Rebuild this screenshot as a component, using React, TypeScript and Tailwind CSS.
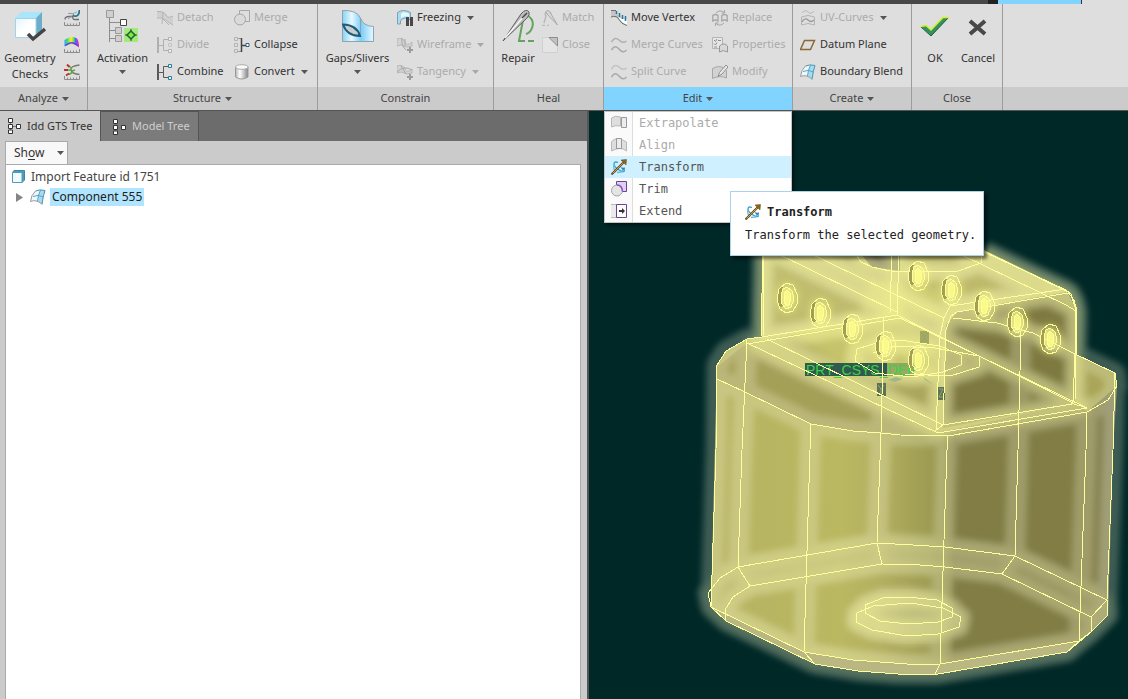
import { ReactNode } from "react";

const G = "#a6a6a6";

function Icon({ children, size = 16 }: { children: ReactNode; size?: number }) {
    return (
        <svg width={size} height={size} viewBox={`0 0 ${size} ${size}`} fill="none" className="shrink-0" aria-hidden="true">
            {children}
        </svg>
    )
}

const Ruler = () => <path d="M.5 12v3.500H15.500V12M3.500 13.500v2M6.500 13.500v2M9.500 13.500v2M12.500 13.500v2" stroke="#8c8c8c" />

function CurveCheckIcon() {
    return (
        <Icon>
            <Ruler />
            <path d="M1 9.500Q1 6.500 5 6.500H9Q8 10 12 9.500H15" stroke="#6f6f6f" strokeWidth="1.300" />
            <path d="M4 3.500Q7 3 10 4Q8 6 4 9" stroke="#8d9ba2" />
            <path d="M9 5.500Q15 8 15.500 0" stroke="#28728d" strokeWidth="1.800" />
            <path d="M9 3.500L13 2" stroke="#8faebb" />
        </Icon>
    )
}

function ShadeCheckIcon() {
    return (
        <Icon>
            <defs>
                <linearGradient id="rainbow">
                    <stop offset="0" stopColor="#25a8f0" />
                    <stop offset=".2" stopColor="#42e07c" />
                    <stop offset=".45" stopColor="#fff02b" />
                    <stop offset=".62" stopColor="#7be04a" />
                    <stop offset=".75" stopColor="#2f7cf0" />
                    <stop offset=".88" stopColor="#c22df5" />
                    <stop offset="1" stopColor="#ff3a4a" />
                </linearGradient>
            </defs>
            <Ruler />
            <path d="M.5 9.500V3Q7-2 13 1.500Q15 4 15 10.500Q12 7 9 7T.5 9.500Z" fill="url(#rainbow)" />
            <path d="M1 8.500Q6 5 9 6T14.500 9" stroke="#6b39ee" strokeWidth="1.500" />
        </Icon>
    )
}

function NormalCheckIcon() {
    return (
        <Icon>
            <Ruler />
            <path d="M15.500 1Q6 2 7 6T15.500 10.500" stroke="#777" strokeWidth="1.300" />
            <path d="M5 2L8 4.500M4 6H8M5 10.500L9 8M8 7L11 6" stroke="#5aab42" strokeWidth="1.500" />
            <path d="M3 .5L5.500 3M0 6H4M2 11.500L5 9.500" stroke="#c03030" strokeWidth="2" />
        </Icon>
    )
}

function CubeCheckIcon() {
    return (
        <Icon size={32}>
            <defs>
                <linearGradient id="cubeFront" x2="1" y2="1">
                    <stop offset="0" stopColor="#e4f5fc" />
                    <stop offset=".5" stopColor="#fff" />
                </linearGradient>
            </defs>
            <path d="M1 8L7 2H28L22 8Z" fill="#a9e5fb" />
            <path d="M22 8L28 2V21L22 27.500Z" fill="#6cadc9" />
            <path d="M1.500 8.500H22V27.500H1.500Z" fill="url(#cubeFront)" stroke="#9fd4ea" />
            <path d="M14 24L19 29L31 19" stroke="#454545" strokeWidth="3.500" />
        </Icon>
    )
}

function ActivationIcon() {
    return (
        <Icon size={32}>
            <path d="M3.500 8V32M3.500 12.500H14M3.500 20.500H9M3.500 28.500H9" stroke="#8d8d8d" />
            <path d="M.5.500h7v7h-7ZM9.500 17.500h6v6h-6ZM9.500 25.500h6v6h-6Z" fill="#cfcfcf" stroke="#9a9a9a" />
            <path d="M14.500 9.500h6v6h-6Z" fill="#fff" stroke="#444" />
            <path d="M18 18H32V32H18Z" fill="#a0ea7e" />
            <path d="M25 19V31M19 25H31" stroke="#3d4a38" />
            <path d="M25 21L29 25L25 29L21 25Z" fill="#6cf24a" stroke="#315927" strokeWidth="1.500" />
        </Icon>
    )
}

function DetachIcon() {
    return (
        <Icon>
            <path d="M0 1.500Q8 1 9 5T16 6V15Q11 12 9 9T0 8Z" fill="#d0d0d0" />
            <path d="M0 1.500Q7 1 9 5T16 6M0 8Q6 7 9 10T16 15M6 2L5 14M5 8L12 15" stroke="#b4b4b4" />
        </Icon>
    )
}

function BranchIcon({ tone, node, dashed }: { tone: string; node: string; dashed?: boolean }) {
    return (
        <Icon>
            <path d="M1 0V16" stroke={tone} strokeWidth="2" />
            <path d="M2 8.500H6M6.500 2.500V13.500M6.500 2.500H12M6.500 13.500H12" stroke={tone} />
            <path d="M11.500.500h3v3h-3ZM11.500 12.500h3v3h-3Z" fill="#e6f5fb" stroke={node} />
            {dashed && <path d="M11.500 6.500h3v3h-3Z" stroke="#c4c4c4" />}
        </Icon>
    )
}

function MergeIcon() {
    return (
        <Icon>
            <path d="M5.500.500h10v11h-10Z" stroke={G} />
            <circle cx="6" cy="9.500" r="5.500" fill="#dadada" stroke={G} />
        </Icon>
    )
}

function CollapseIcon() {
    return (
        <Icon>
            <path d="M.5.500h3v3h-3ZM.5 6.500h3v3h-3ZM.5 12.500h3v3h-3Z" stroke="#b4b4b4" />
            <path d="M4 1.500H7.500M4 14.500H7.500" stroke="#9a9a9a" />
            <path d="M7.500 1V15M7.500 8.500H12" stroke="#444" strokeWidth="1.500" />
            <path d="M12 6.500h3v3h-3Z" fill="#fff" stroke="#2d667b" />
        </Icon>
    )
}

function CylinderIcon() {
    return (
        <Icon>
            <defs>
                <linearGradient id="cyl">
                    <stop offset="0" stopColor="#b5b5b5" />
                    <stop offset=".35" stopColor="#fff" />
                    <stop offset="1" stopColor="#858585" />
                </linearGradient>
            </defs>
            <path d="M1.500 3V13Q7.500 17 14 13V3Z" fill="url(#cyl)" stroke="#999" />
            <ellipse cx="7.800" cy="3" rx="6.300" ry="2.300" fill="#fafafa" stroke="#aaa" />
        </Icon>
    )
}

function GapsIcon() {
    return (
        <Icon size={32}>
            <defs>
                <linearGradient id="gapBlue">
                    <stop offset="0" stopColor="#86d4f5" />
                    <stop offset=".3" stopColor="#e9f8ff" />
                    <stop offset=".6" stopColor="#79cff8" />
                    <stop offset="1" stopColor="#e9f8ff" />
                </linearGradient>
            </defs>
            <path d="M.5.500Q15 0 18.500 8Q21 16 31.500 16.500V31.500H.5Z" fill="url(#gapBlue)" stroke="#8fa3ad" />
            <path d="M18.500 9V27" stroke="#8fa3ad" />
            <path d="M1 14.500Q15 15 18 26Q5 26 1 14.500Z" fill="#cdcdcd" stroke="#1d5e7c" strokeWidth="2" />
        </Icon>
    )
}

function FreezingIcon() {
    return (
        <Icon>
            <path d="M.5 2.500Q6-1.500 13.500 2.500V10Q8 6 3.500 10.500V14H.5Z" fill="#a6ddf5" stroke="#84a0ac" />
            <path d="M4 3.500Q8 1 12 4V7Q8 5 4 8Z" fill="#e8f8ff" />
            <path d="M9 7h3v9H9ZM13 7h3v9h-3Z" fill="#484848" />
        </Icon>
    )
}

function SheetPlusIcon({ cross }: { cross?: boolean }) {
    return (
        <Icon>
            <path d="M0 2Q6 0 8 5T15 5V9Q9 11 7 9T0 9Z" fill="#d3d3d3" stroke="#b8b8b8" />
            <path d={cross ? "M0 8Q7 1 15 6M4 2L9 10" : "M5 1V7Q6 10 9 13M8 2V9"} stroke={G} />
            <path d="M13 10V16M10 13H16" stroke="#9c9c9c" strokeWidth="2" />
        </Icon>
    )
}

function RepairIcon() {
    return (
        <Icon size={32}>
            <path d="M25 5Q33 10 30 18Q28 23 24 24M21 10L17 31H23M26 31H32" stroke="#64a35c" strokeWidth="2" />
            <path d="M1 31L19 4Q24-2 27 2Q28 5 25 8Z" fill="#bdbdbd" stroke="#5c5c5c" />
            <path d="M3 28L22 6" stroke="#f7f7f7" strokeWidth="1.500" />
            <path d="M20 8L25 3" stroke="#444" strokeWidth="1.500" />
        </Icon>
    )
}

function MatchIcon() {
    return (
        <Icon>
            <path d="M0 15.500H3M5 15.500H7M2 13L4 6Q2 3 5 2Q9 1 9 5" stroke="#bababa" strokeWidth="1.500" />
            <path d="M15.500 15L5 4Q3 1 5 .5Q7 0 8.500 3Z" fill="#d6d6d6" stroke="#aaa" />
        </Icon>
    )
}

function CloseSheetIcon() {
    return (
        <Icon>
            <path d="M.5.500h15v15H.5Z" fill="#e5e5e5" stroke="#d0d0d0" />
            <path d="M7 .5H15.500V9Z" fill="#c2c2c2" stroke="#8c8c8c" />
        </Icon>
    )
}

function MoveVertexIcon() {
    return (
        <Icon>
            <path d="M0 .5H5Q7 8 16 9V15.500Q12 15 8 10T0 7Z" fill="#c5c5c5" />
            <path d="M7 7Q12 10 16 9V15Q11 13 7 7Z" fill="#fff" />
            <path d="M0 7Q6 5 8 9.500T16 15.500M0 .5H5" stroke="#6f6f6f" />
            <path d="M5.500 1v3M8.500 3v4M11.500 5v4M14.500 6v5" stroke="#26799e" strokeWidth="1.500" />
        </Icon>
    )
}

function WavesIcon({ light }: { light?: boolean }) {
    return (
        <Icon>
            <path d="M.5 5Q4-1 8 3T15.500 4" stroke={light ? "#c2c2c2" : "#b0b0b0"} strokeWidth="1.500" />
            <path d="M.5 13Q4 7 8 12T15.500 13" stroke="#a9a9a9" strokeWidth="1.500" />
        </Icon>
    )
}

function ReplaceIcon() {
    return (
        <Icon>
            <path d="M.8 5.500V11Q3.500 9 6 11V5.500Q3.500 3.500.8 5.500ZM9.800 5.500V11Q12.500 9 15.200 11V5.500Q12.500 3.500 9.800 5.500Z" stroke={G} strokeWidth="1.300" />
            <path d="M4 3Q8-1 12 2.500M12 13Q8 17 4 13.500M12.500 0V3H9.500M3.500 16V13H6.500" stroke={G} />
        </Icon>
    )
}

function PropertiesIcon() {
    return (
        <Icon>
            <path d="M.5.500h10v11H.5Z" fill="#e6e6e6" stroke="#b5b5b5" />
            <path d="M2 3L3.500 4.500L5 2M6 3.500h3M2 6.500L3.500 8L5 5.500M2 10h3" stroke="#909090" />
            <path d="M7.500 9Q12 5 15.500 9V15Q11 12 7.500 15Z" fill="#d8d8d8" stroke="#979797" />
        </Icon>
    )
}

function ModifyIcon() {
    return (
        <Icon>
            <path d="M.5 4.500Q7 1 12 4L14.500 7V14Q8 11 .5 14.500Z" fill="#d2d2d2" stroke={G} />
            <path d="M6 12.500L7.500 8.500L14 1L16 3L10 10Z" fill="#e8e8e8" stroke="#8f8f8f" />
        </Icon>
    )
}

function UvIcon() {
    return (
        <Icon>
            <path d="M2 3Q5-1 8 2T14 1" stroke="#b8b8b8" />
            <path d="M1.500 7Q8 4 14.500 7V15Q8 12 1.500 15Z" stroke="#b3b3b3" />
            <path d="M2 12Q5 7 8 10T14 10" stroke="#999" strokeWidth="1.300" />
        </Icon>
    )
}

function BlendIcon() {
    return (
        <Icon>
            <path d="M5 2Q10 0 15 1.500Q13 7 12 15.500Q6 10 .5 12.500Q1 6 5 2Z" fill="#eef8fc" />
            <path d="M10.500 1L15 1.500Q13 7 12 15.500L7.500 12Q8 6 10.500 1Z" fill="#a5dcf2" />
            <path d="M10.500 1Q8 6 7.500 12M3 7.500Q8 5 13.500 8" stroke="#5aa5c2" />
            <path d="M5.500 2Q10 0 15 1.500Q13 7 12 15.500" stroke="#4c93b0" />
            <path d="M12 15Q6 10 .5 12.500Q1 6 5.500 2" stroke="#9a9a9a" />
        </Icon>
    )
}

function TransformIcon() {
    return (
        <Icon>
            <path d="M7 3.500Q3 2 3 5T8 11T13.500 11.500" stroke="#3a9dc8" strokeWidth="1.300" />
            <path d="M3 5.500Q2 11 5 13M9.500 8Q13 9 11 13L6 13.500" stroke="#62b9dc" strokeWidth="1.300" />
            <path d="M10 9L14 8.500L13.500 12Z" fill="#2b86b0" />
            <path d="M.5 15.500L14 2" stroke="#5f4616" strokeWidth="2" />
            <path d="M1.500 14.500L13 3" stroke="#c6964b" strokeWidth="1" />
            <path d="M10 1L15.500.500L15 6Z" fill="#8c6420" stroke="#5f4616" strokeWidth=".5" />
        </Icon>
    )
}

function TrimIcon() {
    return (
        <Icon>
            <path d="M5.500.500h10v10h-10Z" fill="#ddd0f2" stroke="#6a4398" />
            <circle cx="6" cy="9.500" r="5.500" fill="#e4e4e4" stroke={G} />
            <path d="M6 4Q11 4 11.500 10.500" stroke="#8a4fc8" strokeWidth="1.500" />
        </Icon>
    )
}

function ExtendIcon() {
    return (
        <Icon>
            <path d="M0 1h6v14H0Z" fill="#ebebeb" />
            <path d="M0 1.500H6M0 14.500H6" stroke="#bbb" />
            <path d="M5.500 1.500h10v13h-10Z" fill="#fff" stroke="#6a4398" />
            <path d="M8 8H12" stroke="#333" strokeWidth="2" />
            <path d="M11 5L14 8L11 11Z" fill="#333" />
        </Icon>
    )
}

function BookIcon({ align }: { align?: boolean }) {
    return (
        <Icon>
            <path d={align ? "M.5 14V5Q3 1 8 2T15.500 5V14Q12 11 8 11.500T.5 14Z" : "M.5 12V3Q4 0 9.500 2V11Q4 10 .5 12Z"} fill="#dedede" stroke="#b8b8b8" />
            <path d={align ? "M5.500 1.500h5v10h-5Z" : "M10.500 2.500h5v10h-5Z"} fill="#ececec" stroke="#999" />
        </Icon>
    )
}

function DatumIcon() {
    return (
        <Icon>
            <path d="M4.500 3.500H14.500L10.500 12.500H.5Z" stroke="#8a6a35" strokeWidth="1.500" />
        </Icon>
    )
}

function OkIcon() {
    return (
        <svg width="28" height="32" viewBox="0 0 28 32" aria-hidden="true">
            <path d="M0 16.500L5 15L10 20L22 7H28L10 26Z" fill="#2f9362" />
            <path d="M0 17L10 26L28 7" fill="none" stroke="#205c33" />
            <path d="M0 16.500L5 15.500L10 20L22 7.500H28" fill="none" stroke="#d9f020" strokeWidth="1.500" />
        </svg>
    )
}

function CancelIcon() {
    return (
        <svg width="20" height="32" viewBox="0 0 20 32" aria-hidden="true">
            <path d="M2 11L17 24M17 11L2 24" stroke="#484848" strokeWidth="4" />
        </svg>
    )
}

function TreeIcon() {
    return (
        <Icon>
            <path d="M3.500 1V15M3 8.500H9" stroke="#777" />
            <path d="M1.500.500h4v4h-4ZM1.500 6.500h4v4h-4ZM1.500 12h4v3.500h-4ZM9.500 6.500h4v4h-4Z" fill="#fff" stroke="#333" />
        </Icon>
    )
}

function FeatureIcon() {
    return (
        <Icon>
            <path d="M1.500 3.500L3 1.500H13.500V11L11 13.500Z" fill="#4d9dba" stroke="#3e879f" />
            <path d="M1.500 3.500H11V13.500H1.500Z" fill="#f2fbff" stroke="#4d9dba" />
        </Icon>
    )
}

function Arrow({ faded }: { faded?: boolean }) {
    return (
        <svg width="7" height="4" viewBox="0 0 7 4" className="shrink-0" aria-hidden="true">
            <path d="M0 0H7L3.500 4Z" fill={faded ? "#a8a8a8" : "#555"} />
        </svg>
    )
}

interface ToolProps {
    icon: ReactNode
    label: string
    disabled?: boolean
    arrow?: boolean
    fadedArrow?: boolean
}

function Tool({ icon, label, disabled, arrow, fadedArrow }: ToolProps) {
    return (
        <button disabled={disabled} className="flex h-[27px] items-center gap-1 whitespace-nowrap text-[#333] disabled:text-[#ababab]">
            {icon}
            <span>{label}</span>
            {arrow && <span className="pl-0.5"><Arrow faded={fadedArrow} /></span>}
        </button>
    )
}

function BigTool({ icon, label, arrow }: ToolProps) {
    return (
        <button className="flex flex-col items-center pt-1.5 text-center leading-4 text-[#333]">
            {icon}
            <span className="mt-2">{label}</span>
            {arrow && <span className="mt-1"><Arrow /></span>}
        </button>
    )
}

interface GroupProps {
    title: string
    width: string
    arrow?: boolean
    active?: boolean
    children: ReactNode
    menu?: ReactNode
}

function Group({ title, width, arrow, active, children, menu }: GroupProps) {
    return (
        <section className={`relative flex shrink-0 flex-col border-r border-[#9c9c9c] ${width}`}>
            <div className="flex h-[83px] items-start">{children}</div>
            <button className={`flex h-[23px] items-center justify-center gap-1 text-[#444] ${active ? "bg-[#80d4ff]" : "bg-[#cbcbcb]"}`}>
                {title}
                {arrow && <Arrow />}
            </button>
            {menu}
        </section>
    )
}

const menuItems = [
    { label: "Extrapolate", icon: <BookIcon />, disabled: true },
    { label: "Align", icon: <BookIcon align />, disabled: true },
    { label: "Transform", icon: <TransformIcon />, selected: true },
    { label: "Trim", icon: <TrimIcon /> },
    { label: "Extend", icon: <ExtendIcon /> },
]

function EditMenu() {
    return (
        <div className="absolute left-0 top-[107px] z-10 w-full border border-[#c4c4c4] bg-white font-['DejaVu_Sans_Mono',monospace] text-[12px] shadow-[2px_2px_3px_rgba(0,0,0,0.5)]">
            {menuItems.map((item) => (
                <button
                    key={item.label}
                    disabled={item.disabled}
                    className={`flex h-[22px] w-full items-center text-left text-[#555] disabled:text-[#ababab] ${item.selected ? "bg-[#cff0ff]" : ""}`}
                >
                    <span className={`flex h-full w-7 items-center justify-center border-r ${item.selected ? "border-[#cff0ff]" : "border-[#ddd] bg-[#fafafa]"}`}>{item.icon}</span>
                    <span className="pl-1.5">{item.label}</span>
                </button>
            ))}
            <div role="tooltip" className="absolute left-[125px] top-[79px] w-[254px] border border-[#a9d3e8] bg-white px-3.5 py-3 leading-4 text-[#222] shadow-[3px_3px_3px_rgba(0,0,0,0.5)]">
                <div className="flex items-center gap-1.5 font-bold"><TransformIcon />Transform</div>
                <p className="mt-[7px] whitespace-nowrap">Transform the selected geometry.</p>
            </div>
        </div>
    )
}

function Ribbon() {
    return (
        <header className="flex border-b border-[#555] bg-[#dedede]">
            <Group title="Analyze" width="w-[88px]" arrow>
                <div className="flex w-[60px] justify-center"><BigTool icon={<CubeCheckIcon />} label="Geometry Checks" /></div>
                <div className="ml-1 flex flex-col">
                    <button aria-label="Curve analysis" className="flex h-[27px] items-center"><CurveCheckIcon /></button>
                    <button aria-label="Shading analysis" className="flex h-[27px] items-center"><ShadeCheckIcon /></button>
                    <button aria-label="Normal analysis" className="flex h-[27px] items-center"><NormalCheckIcon /></button>
                </div>
            </Group>
            <Group title="Structure" width="w-[230px]" arrow>
                <div className="flex w-[69px] justify-center"><BigTool icon={<ActivationIcon />} label="Activation" arrow /></div>
                <div className="flex w-[77px] flex-col">
                    <Tool icon={<DetachIcon />} label="Detach" disabled />
                    <Tool icon={<BranchIcon tone="#b0b0b0" node="#b0b0b0" dashed />} label="Divide" disabled />
                    <Tool icon={<BranchIcon tone="#5a5a5a" node="#2d7e9b" />} label="Combine" />
                </div>
                <div className="flex flex-col">
                    <Tool icon={<MergeIcon />} label="Merge" disabled />
                    <Tool icon={<CollapseIcon />} label="Collapse" />
                    <Tool icon={<CylinderIcon />} label="Convert" arrow />
                </div>
            </Group>
            <Group title="Constrain" width="w-[176px]">
                <div className="flex w-[79px] justify-center"><BigTool icon={<GapsIcon />} label="Gaps/Slivers" arrow /></div>
                <div className="flex flex-col">
                    <Tool icon={<FreezingIcon />} label="Freezing" arrow />
                    <Tool icon={<SheetPlusIcon />} label="Wireframe" disabled arrow fadedArrow />
                    <Tool icon={<SheetPlusIcon cross />} label="Tangency" disabled arrow fadedArrow />
                </div>
            </Group>
            <Group title="Heal" width="w-[110px]">
                <div className="flex w-12 justify-center"><BigTool icon={<RepairIcon />} label="Repair" /></div>
                <div className="flex flex-col">
                    <Tool icon={<MatchIcon />} label="Match" disabled />
                    <Tool icon={<CloseSheetIcon />} label="Close" disabled />
                </div>
            </Group>
            <Group title="Edit" width="w-[189px]" arrow active menu={<EditMenu />}>
                <div className="ml-[7px] flex w-[101px] flex-col">
                    <Tool icon={<MoveVertexIcon />} label="Move Vertex" />
                    <Tool icon={<WavesIcon />} label="Merge Curves" disabled />
                    <Tool icon={<WavesIcon light />} label="Split Curve" disabled />
                </div>
                <div className="flex flex-col">
                    <Tool icon={<ReplaceIcon />} label="Replace" disabled />
                    <Tool icon={<PropertiesIcon />} label="Properties" disabled />
                    <Tool icon={<ModifyIcon />} label="Modify" disabled />
                </div>
            </Group>
            <Group title="Create" width="w-[119px]" arrow>
                <div className="ml-[7px] flex flex-col">
                    <Tool icon={<UvIcon />} label="UV-Curves" disabled arrow />
                    <Tool icon={<DatumIcon />} label="Datum Plane" />
                    <Tool icon={<BlendIcon />} label="Boundary Blend" />
                </div>
            </Group>
            <Group title="Close" width="w-[91px]">
                <div className="flex w-[46px] justify-center"><BigTool icon={<OkIcon />} label="OK" /></div>
                <div className="flex w-10 justify-center"><BigTool icon={<CancelIcon />} label="Cancel" /></div>
            </Group>
            <div className="flex flex-1 flex-col justify-end"><div className="h-[23px] bg-[#cbcbcb]" /></div>
        </header>
    )
}

function TreePanel() {
    return (
        <aside className="flex w-[589px] shrink-0 flex-col border-r-2 border-[#555] bg-[#cbcbcb] text-[12px]">
            <div role="tablist" className="flex h-[30px] bg-[#6c6c6c] text-[11px]">
                <button role="tab" aria-selected="true" className="flex w-[100px] items-center gap-1 bg-[#cbcbcb] pl-[7px] text-[#333]"><TreeIcon />Idd GTS Tree</button>
                <button role="tab" aria-selected="false" className="flex w-[99px] items-center gap-1 border border-b-0 border-[#555] bg-[#7b7b7b] pl-[11px] text-[#cecece]"><TreeIcon />Model Tree</button>
            </div>
            <div className="flex flex-1 flex-col pl-[5px] pr-[6px]">
                <button className="flex h-[23px] w-[63px] items-center justify-between border border-[#aaa] border-b-0 bg-[#f8f8f8] pl-2 pr-[3px] text-[#333]">
                    <span>Sh<u className="underline-offset-2">o</u>w</span><Arrow />
                </button>
                <ul className="flex-1 border border-b-0 border-[#aaa] bg-white pt-[2px] text-[#444]">
                    <li className="flex h-5 items-center gap-1 pl-[5px]"><FeatureIcon />Import Feature id 1751</li>
                    <li className="flex h-5 items-center pl-2.5">
                        <svg width="7" height="9" viewBox="0 0 7 9" aria-hidden="true"><path d="M0 0L7 4.500L0 9Z" fill="#858585" /></svg>
                        <span className="ml-[7px] mr-1"><BlendIcon /></span>
                        <span className="bg-[#b0e4ff] px-0.5 leading-[18px] text-[#222]">Component 555</span>
                    </li>
                </ul>
            </div>
        </aside>
    )
}

// lower body edges
const bodyLines = [
    "M762 337L747 339L726 351L717 365L716 450L711 607",
    "M717 379L745 392L811 424L853 431L881 433L900 435L948 436L1087 412",
    "M747 339L742 450L738 567",
    "M811 424L810 450L804 652",
    "M884 317L881 433L877 543",
    "M948 436L947 450L944 540L940 664",
    "M1021 331L1018 450L1015 556",
    "M1087 412L1086 450L1079 641",
    "M1115 373L1113 450L1107 600",
    "M1075 354L1115 373L1117 386L1108 400L1087 412",
    "M738 567L877 543L913 545L945 547L1015 556L1107 600L1108 615L1091 632L1067 652L938 674H898L858 671L815 664L726 621L711 607L708 593L720 578Z",
    "M750 586L882 564L920 565L945 567L1002 574L1091 617V632",
    "M750 586L733 597L725 610L726 621",
    "M711 607L804 652L853 660L907 664H940L1079 641L1091 632",
    "M804 652L815 664M940 664L935 674M738 567L750 586M877 543L882 564M1015 556L1002 574M1107 600L1091 617M1079 641L1067 652",
    "M865 605L883 598L907 597L937 600L952 608V617L938 622L908 624L880 621L865 613Z",
    "M857 613L873 606L910 603L943 608L961 617L959 627L938 634L907 636L872 630L856 622Z",
]

// bracket and cover plate edges
const topLines = [
    "M763 250L761 337M764 250L763 337",
    "M762 337L897 315L1073 403",
    "M747 344L900 318L1087 408L1071 403",
    "M747 343L938 433L1087 408",
    "M767 339L943 425L1072 404",
    "M770 250L897 312M803 250L944 318",
    "M857 256L861 262L872 267L890 271L955 272L981 263L982 250",
    "M892 250L890 313M899 250L897 317",
    "M984 252L1066 290L1071 294L1075 307V354L1073 403",
    "M960 254L1066 305L1076 311M986 252L1068 292L1074 300L1077 311L1075 400",
    "M1066 289L950 306L944 318L940 335L936 430L943 425",
    "M1068 293L957 312L951 316L946 330L943 425",
    "M953 318L997 323L1033 333L1075 354",
    "M857 349L880 342L900 340L940 346L961 355V365L943 372L912 377L875 373L855 361Z",
    "M873 353L895 346L935 348L979 356V367L950 376L905 374",
]

const bolts = [
    [787, 298], [820, 313], [852, 329], [885, 346], [918, 360],
    [918, 276], [951, 290], [984, 306], [1017, 322], [1050, 339],
]

function Viewport() {
    return (
        <main className="min-w-0 flex-1 overflow-hidden bg-[#002827]">
            <svg viewBox="589 111 539 588" className="block w-full" role="img" aria-label="Model view">
                <defs>
                    <linearGradient id="bodyFill" gradientUnits="userSpaceOnUse" x1="711" y1="0" x2="1117" y2="0">
                        <stop offset="0" stopColor="#b6b362" />
                        <stop offset=".32" stopColor="#bab861" />
                        <stop offset=".41" stopColor="#b3b060" />
                        <stop offset=".57" stopColor="#98964f" />
                        <stop offset=".6" stopColor="#817d45" />
                        <stop offset=".93" stopColor="#817d45" />
                        <stop offset="1" stopColor="#82805c" />
                    </linearGradient>
                    <linearGradient id="topFill" x2="1" y2="1">
                        <stop offset="0" stopColor="#c2bf70" />
                        <stop offset=".5" stopColor="#bdb96a" />
                        <stop offset="1" stopColor="#8b874a" />
                    </linearGradient>
                    <filter id="soft" x="-20%" y="-20%" width="140%" height="140%"><feGaussianBlur stdDeviation="3" /></filter>
                    <filter id="softer" x="-20%" y="-20%" width="140%" height="140%"><feGaussianBlur stdDeviation="5" /></filter>
                </defs>
                <path d="M717 365L726 351L747 339L762 337L1075 354L1115 373L1117 386L1113 450L1108 615L1091 632L1067 652L938 674H898L858 671L815 664L726 621L711 607Z" fill="url(#bodyFill)" />
                <path d="M726 621L815 664L858 671L898 674H938L1067 652L1091 632L1079 641L940 664H907L853 660L804 652L711 607Z" fill="#938f5c" />
                <path d="M717 367L747 343L881 404L938 434L853 431L811 424L717 379Z" fill="#a5a058" />
                <path d="M762 250H984L1066 290L1075 307L1073 403L938 433L762 345Z" fill="url(#topFill)" />
                <path d="M747 343L897 316L943 340L938 433Z" fill="#aaa65a" />
                <path d="M946 325L957 312L1066 292L1075 307V403L943 428Z" fill="#7d7940" />
                <path d="M857 250H900V271L872 267Z" fill="#6d6a48" />
                <path d="M1075 354L1115 373L1117 386L1087 412L1075 400Z" fill="#a9a659" />
                <g filter="url(#soft)" opacity=".24" stroke="#ffffe0" strokeWidth="21" fill="none" strokeLinejoin="round">
                    {bodyLines.map((d) => <path key={d} d={d} />)}
                    {topLines.map((d) => <path key={d} d={d} />)}
                </g>
                <g filter="url(#softer)" opacity=".4" stroke="#ffff9c" strokeWidth="10" fill="none">
                    {topLines.map((d) => <path key={d} d={d} />)}
                </g>
                <g filter="url(#softer)" opacity=".16" stroke="#ffffa8" strokeWidth="10" fill="none">
                    {bodyLines.slice(10).map((d) => <path key={d} d={d} />)}
                </g>
                <g filter="url(#softer)" opacity=".3" stroke="#ffffa8" strokeWidth="10" fill="none">
                    {bodyLines.slice(15).map((d) => <path key={d} d={d} />)}
                </g>
                <g filter="url(#softer)" opacity=".55" fill="#ffff8c">
                    {bolts.map(([x, y]) => <ellipse key={`${x}-${y}`} cx={x} cy={y} rx="10" ry="14" />)}
                    <path d="M790 334L897 315L938 345L935 380L850 372Z" opacity=".6" />
                    <path d="M870 280L940 290L945 320L900 318L860 310Z" opacity=".5" />
                </g>
                <g stroke="#97a56b" fill="none">
                    <path d="M877 383h9v13h-9ZM937 387h8v13h-8Z" fill="#5d7257" stroke="none" />
                    <path d="M920 331h9v13h-9Z" fill="#a5aa62" stroke="none" />
                    <path d="M878 385L881 389L884 385M881 389V394M939 389H943L939 397H943M922 333L927 342M927 333L922 342" />
                </g>
                <path d="M805 363h82v13h-82Z" fill="#315951" />
                <path d="M887 363h27v13h-27Z" fill="#7d935c" opacity=".7" />
                <text x="806" y="375" fontSize="14" fill="#38d53c" className="font-['Liberation_Sans',sans-serif]">PRT_CSYS_DEF</text>
                <path d="M888 380L896 377L903 379L895 382ZM923 377L934 385L925 380Z" fill="#9fb889" />
                <g stroke="#ffff9e" fill="none" shapeRendering="crispEdges">
                    {bodyLines.map((d) => <path key={d} d={d} />)}
                    {topLines.map((d) => <path key={d} d={d} />)}
                </g>
                {bolts.map(([x, y]) => (
                    <g key={`${x}-${y}`} transform={`translate(${x} ${y})`} stroke="#ffff9a" fill="none" shapeRendering="crispEdges">
                        <path d="M-7-10Q-12 0-7 9L-4 8Q-7 0-4-12Z" fill="#a29e57" stroke="none" />
                        <path d="M-1-15L6-13L10-4V6L6 13L-1 15L-7 11L-10 2L-8-9Z" />
                        <path d="M0-11L5-7L7 1L4 9L-1 11L-5 6L-6-3L-4-9Z" fill="#f4f286" fillOpacity=".5" />
                        <path d="M0-8L3-5L4 1L2 7L-1 8L-3 3L-3-4Z" fill="#ffff8a" fillOpacity=".7" />
                    </g>
                ))}
            </svg>
        </main>
    )
}

export default function App() {
    return (
        <div className="flex min-h-screen flex-col overflow-hidden bg-[#002827] font-['Noto_Sans',sans-serif] text-[11px]">
            <div className="flex h-1 justify-end bg-[#484848]">
                <div className="w-2.5 bg-[#222]" />
                <div className="w-[84px] border-r border-[#333] bg-[#80d4ff]" />
                <div className="w-[46px] bg-[#dedede]" />
            </div>
            <Ribbon />
            <div className="flex flex-1">
                <TreePanel />
                <Viewport />
            </div>
        </div>
    )
}
